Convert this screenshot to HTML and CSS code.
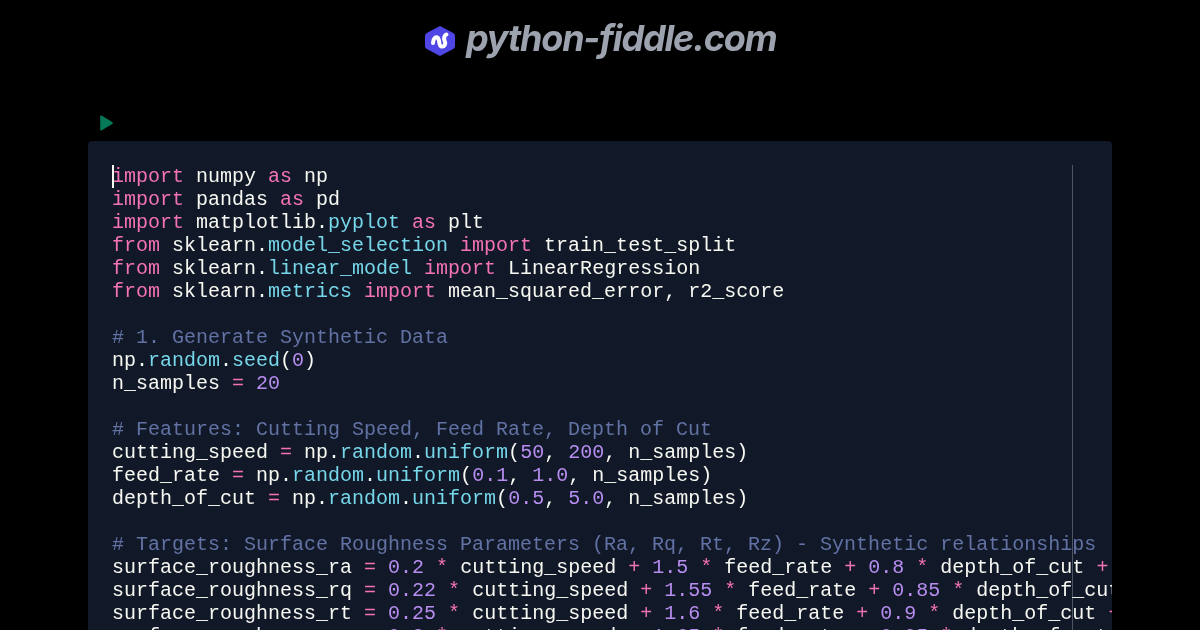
FILE: index.html
```html
<!DOCTYPE html>
<html lang="en">
<head>
<meta charset="utf-8">
<title>python-fiddle.com</title>
<link rel="stylesheet" href="styles.css">
</head>
<body>
<header class="brand">
<svg class="logo" viewBox="0 0 30 30" width="30" height="30" aria-hidden="true">
<path class="logo-hex" d="M15 0 L28.200 7 Q30 8 30 10 V20 Q30 22 28.200 23 L15 30 L1.800 23 Q0 22 0 20 V10 Q0 8 1.800 7 Z"/>
<path class="logo-snake" d="M8 17 C8 12.500 11 10 13 12 C15 14.500 13.500 20 16.500 20.500 C20 21 21 17.500 19.500 14.500 C18.500 12 19.500 9 21.500 8.500"/>
</svg>
<h1 class="brand-name">python-fiddle.com</h1>
</header>
<div class="toolbar">
<svg class="run" viewBox="0 0 13 16" width="13" height="16" aria-hidden="true"><path d="M1.500 0.600 L12.300 6.900 Q13.200 8 12.300 9.100 L1.500 15.400 Q0.200 15.800 0.200 14.500 V1.500 Q0.200 0.200 1.500 0.600 Z"/></svg>
</div>
<main class="editor">
<div class="margin-line"></div>
<pre class="code"><span class="caret"></span><span class="k">import</span> numpy <span class="k">as</span> np
<span class="k">import</span> pandas <span class="k">as</span> pd
<span class="k">import</span> matplotlib.<span class="f">pyplot</span> <span class="k">as</span> plt
<span class="k">from</span> sklearn.<span class="f">model_selection</span> <span class="k">import</span> train_test_split
<span class="k">from</span> sklearn.<span class="f">linear_model</span> <span class="k">import</span> LinearRegression
<span class="k">from</span> sklearn.<span class="f">metrics</span> <span class="k">import</span> mean_squared_error, r2_score

<span class="c"># 1. Generate Synthetic Data</span>
np.<span class="f">random</span>.<span class="f">seed</span>(<span class="n">0</span>)
n_samples <span class="k">=</span> <span class="n">20</span>

<span class="c"># Features: Cutting Speed, Feed Rate, Depth of Cut</span>
cutting_speed <span class="k">=</span> np.<span class="f">random</span>.<span class="f">uniform</span>(<span class="n">50</span>, <span class="n">200</span>, n_samples)
feed_rate <span class="k">=</span> np.<span class="f">random</span>.<span class="f">uniform</span>(<span class="n">0.1</span>, <span class="n">1.0</span>, n_samples)
depth_of_cut <span class="k">=</span> np.<span class="f">random</span>.<span class="f">uniform</span>(<span class="n">0.5</span>, <span class="n">5.0</span>, n_samples)

<span class="c"># Targets: Surface Roughness Parameters (Ra, Rq, Rt, Rz) - Synthetic relationships</span>
surface_roughness_ra <span class="k">=</span> <span class="n">0.2</span> <span class="k">*</span> cutting_speed <span class="k">+</span> <span class="n">1.5</span> <span class="k">*</span> feed_rate <span class="k">+</span> <span class="n">0.8</span> <span class="k">*</span> depth_of_cut <span class="k">+</span> np.<span class="f">random</span>
surface_roughness_rq <span class="k">=</span> <span class="n">0.22</span> <span class="k">*</span> cutting_speed <span class="k">+</span> <span class="n">1.55</span> <span class="k">*</span> feed_rate <span class="k">+</span> <span class="n">0.85</span> <span class="k">*</span> depth_of_cut <span class="k">+</span> np.<span class="f">random</span>
surface_roughness_rt <span class="k">=</span> <span class="n">0.25</span> <span class="k">*</span> cutting_speed <span class="k">+</span> <span class="n">1.6</span> <span class="k">*</span> feed_rate <span class="k">+</span> <span class="n">0.9</span> <span class="k">*</span> depth_of_cut <span class="k">+</span> np.<span class="f">random</span>
surface_roughness_rz <span class="k">=</span> <span class="n">0.2</span> <span class="k">*</span> cutting_speed <span class="k">+</span> <span class="n">1.65</span> <span class="k">*</span> feed_rate <span class="k">+</span> <span class="n">0.95</span> <span class="k">*</span> depth_of_cut <span class="k">+</span> np.<span class="f">random</span></pre>
</main>
</body>
</html>
```
FILE: styles.css
```css
html, body {
  margin: 0;
  height: 630px;
  overflow: hidden;
  background: #000;
}
.brand {
  display: flex;
  align-items: center;
  justify-content: center;
  gap: 11px;
  height: 76px;
  padding-left: 2px;
  box-sizing: border-box;
}
.logo { flex: none; margin-top: 6px; }
.logo-hex { fill: #4f46e5; }
.logo-snake {
  fill: none;
  stroke: #fff;
  stroke-width: 4;
  stroke-linecap: round;
  stroke-linejoin: round;
}
.brand-name {
  margin: 0;
  font-family: Inter, sans-serif;
  font-size: 36px;
  font-weight: 700;
  font-style: italic;
  line-height: 44px;
  letter-spacing: -1.2px;
  font-variant-ligatures: none;
  color: #9ca3af;
  will-change: transform;
}
.toolbar {
  height: 65px;
  padding: 39px 0 0 100px;
  box-sizing: border-box;
}
.run { display: block; fill: #047857; }
.editor {
  position: relative;
  margin: 0 88px;
  height: 489px;
  padding: 24px 0 0 24px;
  box-sizing: border-box;
  overflow: hidden;
  background: #111827;
  border-radius: 4px 4px 0 0;
}
.margin-line {
  position: absolute;
  left: 984px;
  top: 24px;
  bottom: 0;
  width: 1px;
  background: #4b5563;
}
.code {
  position: relative;
  margin: 0;
  font-family: "Liberation Mono", monospace;
  font-size: 20px;
  line-height: 23px;
  color: #f8f8f2;
  white-space: pre;
  will-change: transform;
}
.caret {
  position: absolute;
  left: 0;
  top: 0;
  width: 2px;
  height: 23px;
  background: #f8f8f2;
}
.k { color: #f472b6; }
.f { color: #76d7ea; }
.n { color: #b78df0; }
.c { color: #6272a4; }
```
